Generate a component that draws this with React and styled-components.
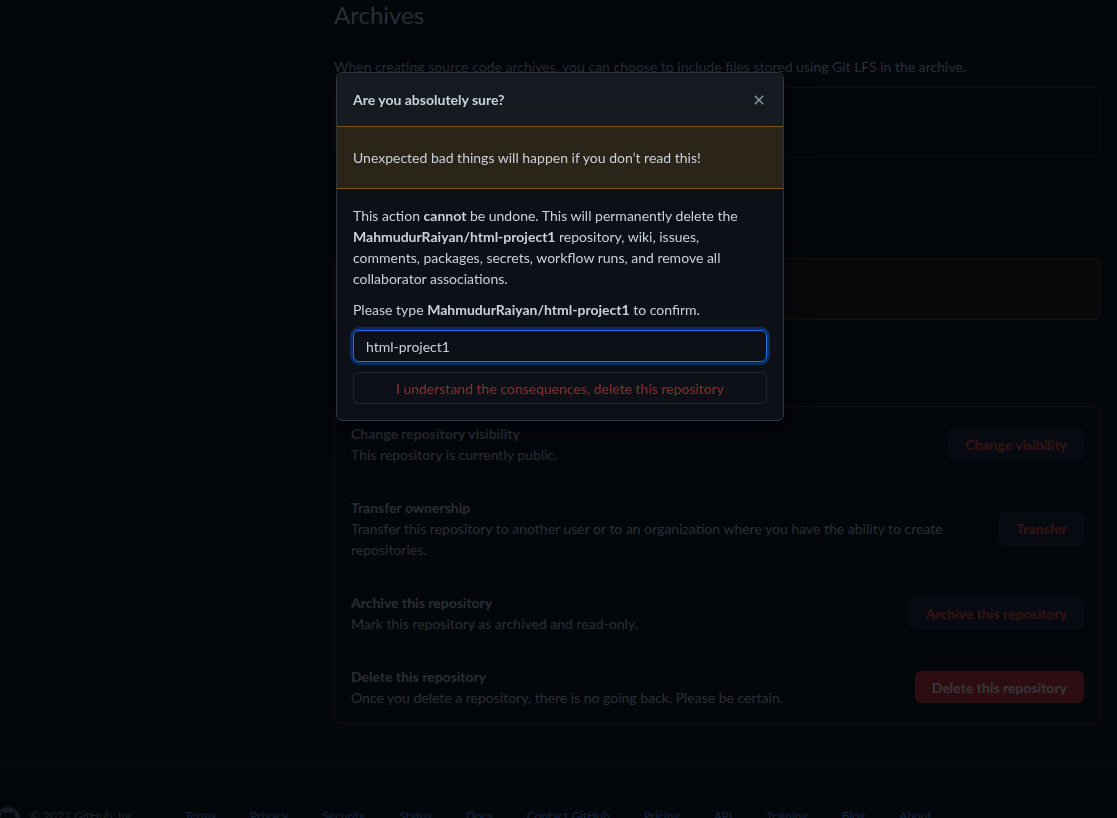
import styled, { createGlobalStyle } from "styled-components"

const GlobalStyle = createGlobalStyle`
    html, body {
        margin: 0;
        padding: 0;
        background: #0d1117;
        overflow: hidden;
    }
    body {
        font-family: Lato, "Noto Sans", "Liberation Sans", sans-serif;
        font-size: 14px;
        line-height: 1.5;
        color: #c9d1d9;
    }
    * {
        box-sizing: border-box;
    }
`

const dangerRows = [
    { title: "Change repository visibility", text: "This repository is currently public.", button: "Change visibility" },
    { title: "Transfer ownership", text: "Transfer this repository to another user or to an organization where you have the ability to create repositories.", button: "Transfer" },
    { title: "Archive this repository", text: "Mark this repository as archived and read-only.", button: "Archive this repository" },
    { title: "Delete this repository", text: "Once you delete a repository, there is no going back. Please be certain.", button: "Delete this repository", primary: true },
]

const footerLinks = ["Terms", "Privacy", "Security", "Status", "Docs", "Contact GitHub", "Pricing", "API", "Training", "Blog", "About"]

export default function App() {
    return (
        <>
            <GlobalStyle />
            <Page>
                <Main>
                    <Heading>Archives</Heading>
                    <Note>When creating source code archives, you can choose to include files stored using Git LFS in the archive.</Note>
                    <Box>
                        <CheckRow>
                            <input type="checkbox" />
                            <strong>Include Git LFS objects in archives</strong>
                        </CheckRow>
                        <Muted>Git LFS usage in archives is billed at the same rate as usage with the client.</Muted>
                    </Box>

                    <Heading top={44}>Pushes</Heading>
                    <WarnBox>
                        <Muted>Limit how many branches and tags can be updated in a single push.</Muted>
                    </WarnBox>

                    <Heading top={30} plain>Danger Zone</Heading>
                    <DangerBox>
                        {dangerRows.map((row) => (
                            <DangerRow key={row.title}>
                                <DangerText>
                                    <strong>{row.title}</strong>
                                    <p>{row.text}</p>
                                </DangerText>
                                <DangerButton primary={row.primary}>{row.button}</DangerButton>
                            </DangerRow>
                        ))}
                    </DangerBox>
                </Main>

                <Footer>
                    <FooterLogo viewBox="0 0 16 16">
                        <path fill="#6e7681" d="M8 0C3.58 0 0 3.58 0 8c0 3.54 2.29 6.53 5.47 7.59.4.07.55-.17.55-.38 0-.19-.01-.82-.01-1.49-2.01.37-2.530-.49-2.690-.94-.09-.23-.48-.94-.82-1.130-.28-.15-.68-.52-.01-.53.63-.01 1.080.58 1.230.82.72 1.210 1.870.87 2.330.66.07-.52.28-.87.51-1.070-1.780-.2-3.640-.89-3.640-3.950 0-.87.31-1.590.82-2.150-.08-.2-.36-1.020.08-2.120 0 0 .67-.21 2.200.82.64-.18 1.320-.27 2-.27.68 0 1.360.09 2 .27 1.530-1.040 2.200-.82 2.200-.82.44 1.100.16 1.920.08 2.120.51.56.82 1.270.82 2.150 0 3.070-1.870 3.750-3.650 3.950.29.25.54.73.54 1.480 0 1.070-.01 1.930-.01 2.200 0 .21.15.46.55.38A8.013 8.013 0 0016 8c0-4.420-3.580-8-8-8z" />
                    </FooterLogo>
                    <Copy>© 2022 GitHub, Inc.</Copy>
                    <FooterLinks>
                        {footerLinks.map((l) => (
                            <a key={l} href="#">{l}</a>
                        ))}
                    </FooterLinks>
                </Footer>
            </Page>

            <Overlay>
                <Dialog>
                    <DialogHeader>
                        <DialogTitle>Are you absolutely sure?</DialogTitle>
                        <CloseButton aria-label="Close">
                            <svg width="16" height="16" viewBox="0 0 16 16">
                                <path fill="#8b949e" d="M3.72 3.72a.75.75 0 011.06 0L8 6.94l3.22-3.22a.75.75 0 111.06 1.06L9.06 8l3.22 3.22a.75.75 0 11-1.06 1.06L8 9.06l-3.22 3.22a.75.75 0 01-1.06-1.06L6.94 8 3.72 4.78a.75.75 0 010-1.06z" />
                            </svg>
                        </CloseButton>
                    </DialogHeader>
                    <Flash>Unexpected bad things will happen if you don’t read this!</Flash>
                    <DialogBody>
                        <p>
                            This action <strong>cannot</strong> be undone. This will permanently delete the<br />
                            <strong>MahmudurRaiyan/html-project1</strong> repository, wiki, issues,<br />
                            comments, packages, secrets, workflow runs, and remove all<br />
                            collaborator associations.
                        </p>
                        <p>
                            Please type <strong>MahmudurRaiyan/html-project1</strong> to confirm.
                        </p>
                        <ConfirmInput defaultValue="html-project1" autoFocus />
                        <ConfirmButton disabled>I understand the consequences, delete this repository</ConfirmButton>
                    </DialogBody>
                </Dialog>
            </Overlay>
        </>
    )
}

const Page = styled.div`
    min-height: 818px;
    display: flex;
    flex-direction: column;
`

const Main = styled.main`
    width: 767px;
    margin: 0 0 0 334px;
    padding-bottom: 40px;
`

const Heading = styled.h2`
    margin: ${(p) => p.top || 0}px 0 17px;
    padding-bottom: 8px;
    border-bottom: 1px solid ${(p) => (p.plain ? "transparent" : "#21262d")};
    font-size: 24px;
    font-weight: 400;
    line-height: 30px;
    color: #c9d1d9;
`

const Note = styled.p`
    margin: 0 0 10px;
    color: #c9d1d9;
`

const Box = styled.div`
    border: 1px solid #30363d;
    border-radius: 6px;
    padding: 12px 16px;
    height: 71px;
`

const CheckRow = styled.label`
    display: flex;
    align-items: center;
    gap: 8px;
`

const Muted = styled.p`
    margin: 0;
    font-size: 12px;
    color: #8b949e;
`

const WarnBox = styled.div`
    height: 62px;
    padding: 20px 16px;
    border: 1px solid rgba(187, 128, 9, 0.4);
    border-radius: 6px;
    background: rgba(187, 128, 9, 0.15);
`

const DangerBox = styled.div`
    border: 1px solid rgba(248, 81, 73, 0.4);
    border-radius: 6px;
`

const DangerRow = styled.div`
    display: flex;
    align-items: center;
    justify-content: space-between;
    gap: 16px;
    padding: 16px 16px 15px;
    & + & {
        border-top: 1px solid #21262d;
    }
`

const DangerText = styled.div`
    strong {
        display: block;
        font-weight: 700;
    }
    p {
        margin: 0;
    }
`

const DangerButton = styled.button`
    flex-shrink: 0;
    height: 32px;
    padding: 0 16px;
    border-radius: 6px;
    border: 1px solid ${(p) => (p.primary ? "rgba(240, 246, 252, 0.1)" : "#30363d")};
    background: ${(p) => (p.primary ? "#da3633" : "#21262d")};
    color: ${(p) => (p.primary ? "#ffffff" : "#f85149")};
    font-family: inherit;
    font-size: 14px;
    font-weight: 700;
`

const Footer = styled.footer`
    margin-top: auto;
    height: 53px;
    border-top: 1px solid #21262d;
    display: flex;
    align-items: flex-start;
    gap: 10px;
    padding-top: 41px;
    font-size: 12px;
    line-height: 18px;
`

const FooterLogo = styled.svg`
    width: 24px;
    height: 24px;
    margin: 0 0 0 -4px;
    flex-shrink: 0;
`

const Copy = styled.span`
    color: #8b949e;
    margin-right: 38px;
`

const FooterLinks = styled.nav`
    display: flex;
    gap: 34px;
    a {
        color: #58a6ff;
        text-decoration: none;
    }
`

const Overlay = styled.div`
    position: fixed;
    inset: 0;
    background: rgba(1, 4, 9, 0.8);
`

const Dialog = styled.div`
    position: absolute;
    left: 336px;
    top: 72px;
    width: 448px;
    border: 1px solid #30363d;
    border-radius: 6px;
    background: #0d1117;
    overflow: hidden;
    box-shadow: 0 8px 24px rgba(1, 4, 9, 0.6);
`

const DialogHeader = styled.div`
    display: flex;
    align-items: center;
    justify-content: space-between;
    height: 53px;
    padding: 0 16px;
    background: #161b22;
`

const DialogTitle = styled.h1`
    margin: 0;
    font-size: 14px;
    font-weight: 700;
    color: #c9d1d9;
`

const CloseButton = styled.button`
    display: flex;
    padding: 0;
    border: 0;
    background: none;
`

const Flash = styled.div`
    padding: 20px 16px;
    border-top: 1px solid #7d5a14;
    border-bottom: 1px solid #7d5a14;
    background: #2a2419;
    color: #c9d1d9;
`

const DialogBody = styled.div`
    padding: 16px;
    p {
        margin: 0 0 10px;
    }
    strong {
        font-weight: 700;
    }
`

const ConfirmInput = styled.input`
    display: block;
    width: 100%;
    height: 32px;
    padding: 5px 12px;
    border: 1px solid #1f6feb;
    border-radius: 6px;
    background: #0d1117;
    color: #c9d1d9;
    caret-color: #c9d1d9;
    font-family: inherit;
    font-size: 14px;
    outline: none;
    box-shadow: 0 0 0 3px rgba(12, 45, 107, 0.9);
`

const ConfirmButton = styled.button`
    display: block;
    width: 100%;
    height: 32px;
    margin-top: 10px;
    border: 1px solid rgba(240, 246, 252, 0.1);
    border-radius: 6px;
    background: #0d1117;
    color: rgba(248, 81, 73, 0.5);
    font-family: inherit;
    font-size: 14px;
    font-weight: 400;
`
